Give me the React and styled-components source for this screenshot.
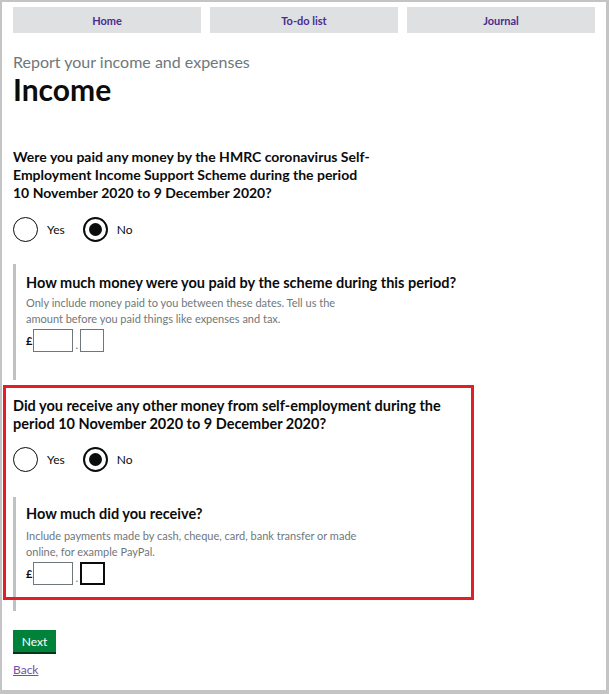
import React from "react";
import styled, { createGlobalStyle } from "styled-components";

const GlobalStyle = createGlobalStyle`
  * {
    box-sizing: border-box;
  }
  body {
    margin: 0;
    background: #ffffff;
    font-family: Lato, "Liberation Sans", Arial, sans-serif;
    color: #0b0c0c;
  }
`;

const App = () => {
  return (
    <>
      <GlobalStyle />
      <Frame>
        <Nav>
          <NavItem href="#">Home</NavItem>
          <NavItem href="#">To-do list</NavItem>
          <NavItem href="#">Journal</NavItem>
        </Nav>

        <Caption>Report your income and expenses</Caption>
        <Title>Income</Title>

        <Question $width={372} $size={14} $top={43}>
          Were you paid any money by the HMRC coronavirus Self-Employment Income
          Support Scheme during the period
          <br />
          10 November 2020 to 9 December 2020?
        </Question>
        <Radios>
          <RadioItem>
            <Radio />
            <RadioLabel>Yes</RadioLabel>
          </RadioItem>
          <RadioItem>
            <Radio $checked />
            <RadioLabel>No</RadioLabel>
          </RadioItem>
        </Radios>

        <Conditional $top={22} $padTop={10} $padBottom={28}>
          <CondHeading>
            How much money were you paid by the scheme during this period?
          </CondHeading>
          <Hint>
            Only include money paid to you between these dates. Tell us the
            amount before you paid things like expenses and tax.
          </Hint>
          <Amount>
            <Pound>£</Pound>
            <AmountInput $w={40} />
            <Dot>.</Dot>
            <AmountInput $w={24} />
          </Amount>
        </Conditional>

        <Highlight>
          <Question $width={440} $size={14.5}>
            Did you receive any other money from self-employment during the
            period 10 November 2020 to 9 December 2020?
          </Question>
          <Radios $top={14}>
            <RadioItem>
              <Radio />
              <RadioLabel>Yes</RadioLabel>
            </RadioItem>
            <RadioItem>
              <Radio $checked />
              <RadioLabel>No</RadioLabel>
            </RadioItem>
          </Radios>

          <Conditional $top={25} $padTop={8} $padBottom={26}>
            <CondHeading>How much did you receive?</CondHeading>
            <Hint $top={5}>
              Include payments made by cash, cheque, card, bank transfer or made
              online, for example PayPal.
            </Hint>
            <Amount>
              <Pound>£</Pound>
              <AmountInput $w={40} />
              <Dot>.</Dot>
              <AmountInput $w={25} $focus />
            </Amount>
          </Conditional>
        </Highlight>

        <NextButton>Next</NextButton>
        <BackLink href="#">Back</BackLink>
      </Frame>
    </>
  );
};

export default App;

const Frame = styled.div`
  width: 609px;
  height: 694px;
  border-style: solid;
  border-color: #c4c4c4;
  border-width: 2px 3px 4px 2px;
  padding: 5px 11px 0 11px;
  overflow: hidden;
`;

const Nav = styled.nav`
  display: grid;
  grid-template-columns: repeat(3, 188px);
  gap: 9px;
`;

const NavItem = styled.a`
  height: 26px;
  background: #dee0e2;
  display: flex;
  align-items: center;
  justify-content: center;
  font-size: 11px;
  font-weight: 700;
  color: #4c2c92;
  text-decoration: none;
`;

const Caption = styled.div`
  margin-top: 19px;
  font-size: 16px;
  line-height: 20px;
  color: #6f777b;
`;

const Title = styled.h1`
  margin: 1px 0 0;
  font-size: 30px;
  line-height: 32px;
  font-weight: 700;
`;

const Question = styled.div`
  margin-top: ${(p) => p.$top || 0}px;
  max-width: ${(p) => p.$width}px;
  font-size: ${(p) => p.$size}px;
  line-height: 18px;
  font-weight: 700;
`;

const Radios = styled.div`
  margin-top: ${(p) => (p.$top !== undefined ? p.$top : 15)}px;
  display: flex;
  gap: 18px;
`;

const RadioItem = styled.label`
  display: flex;
  align-items: center;
  gap: 9px;
`;

const Radio = styled.span`
  width: 25px;
  height: 25px;
  border-radius: 50%;
  border: ${(p) => (p.$checked ? "2px" : "1.5px")} solid #0b0c0c;
  display: flex;
  align-items: center;
  justify-content: center;

  &::after {
    content: "";
    display: ${(p) => (p.$checked ? "block" : "none")};
    width: 13px;
    height: 13px;
    border-radius: 50%;
    background: #0b0c0c;
  }
`;

const RadioLabel = styled.span`
  font-size: 12px;
  line-height: 16px;
`;

const Conditional = styled.div`
  margin-top: ${(p) => p.$top}px;
  border-left: 3px solid #bfc1c3;
  padding: ${(p) => p.$padTop}px 0 ${(p) => p.$padBottom}px 10px;
`;

const CondHeading = styled.div`
  font-size: 14.5px;
  line-height: 18px;
  font-weight: 700;
`;

const Hint = styled.div`
  margin-top: ${(p) => (p.$top !== undefined ? p.$top : 3)}px;
  max-width: 345px;
  font-size: 11px;
  line-height: 16px;
  color: #6f777b;
`;

const Amount = styled.div`
  margin-top: 2px;
  display: flex;
  align-items: flex-end;
`;

const Pound = styled.span`
  font-size: 11px;
  font-weight: 700;
  line-height: 16px;
  margin-right: 1px;
  align-self: center;
`;

const Dot = styled.span`
  font-size: 11px;
  line-height: 14px;
  width: 7px;
  text-align: center;
  color: #6f777b;
`;

const AmountInput = styled.span`
  width: ${(p) => p.$w}px;
  height: 23px;
  border: ${(p) => (p.$focus ? "2px solid #0b0c0c" : "1.5px solid #6f777b")};
  background: #ffffff;
`;

const Highlight = styled.section`
  position: relative;
  padding-top: 17px;

  &::after {
    content: "";
    position: absolute;
    left: -10px;
    right: 121px;
    top: 5px;
    bottom: 11px;
    border: 3px solid #e41e26;
    pointer-events: none;
  }
`;

const NextButton = styled.button`
  display: block;
  margin-top: 19px;
  width: 43px;
  height: 24px;
  padding: 0 0 2px;
  border: none;
  background: #00823b;
  box-shadow: inset 0 -2px 0 #003618;
  color: #ffffff;
  font-family: inherit;
  font-size: 12px;
  cursor: pointer;
`;

const BackLink = styled.a`
  display: inline-block;
  margin-top: 8px;
  font-size: 12px;
  line-height: 16px;
  color: #6f4fae;
`;
